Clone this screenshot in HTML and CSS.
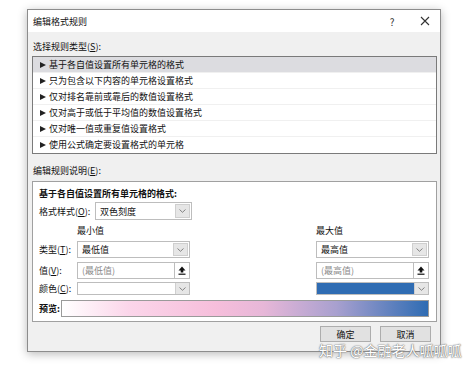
FILE: index.html
```html
<!DOCTYPE html>
<html lang="zh-CN">
<head>
    <meta charset="UTF-8">
    <title>编辑格式规则</title>
    <link rel="stylesheet" href="styles.css">
</head>
<body>

    <div class="dialog">
        <div class="title-bar">
            <span class="title">编辑格式规则</span>
            <span class="title-btn help">?</span>
            <span class="title-btn close">
                <svg width="10" height="10" viewBox="0 0 10 10"><path d="M1 1L9 9M9 1L1 9" stroke="#333" stroke-width="1.1"/></svg>
            </span>
        </div>

        <div class="label">选择规则类型(<u>S</u>):</div>
        <ul class="rule-list">
            <li class="selected">基于各自值设置所有单元格的格式</li>
            <li>只为包含以下内容的单元格设置格式</li>
            <li>仅对排名靠前或靠后的数值设置格式</li>
            <li>仅对高于或低于平均值的数值设置格式</li>
            <li>仅对唯一值或重复值设置格式</li>
            <li>使用公式确定要设置格式的单元格</li>
        </ul>

        <div class="label second">编辑规则说明(<u>E</u>):</div>
        <div class="panel">
            <div class="heading">基于各自值设置所有单元格的格式:</div>

            <div class="style-row">
                <span class="row-label">格式样式(<u>O</u>):</span>
                <div class="select style-select">
                    <span class="select-text">双色刻度</span>
                    <span class="drop"><svg width="7" height="4" viewBox="0 0 7 4"><path d="M0.5 0.5L3.5 3.3L6.5 0.5" fill="none" stroke="#777" stroke-width="0.9"/></svg></span>
                </div>
            </div>

            <div class="grid-row heads">
                <span></span>
                <span>最小值</span>
                <span></span>
                <span>最大值</span>
            </div>

            <div class="grid-row type-row">
                <span class="row-label">类型(<u>T</u>):</span>
                <div class="select">
                    <span class="select-text">最低值</span>
                    <span class="drop"><svg width="7" height="4" viewBox="0 0 7 4"><path d="M0.5 0.5L3.5 3.3L6.5 0.5" fill="none" stroke="#777" stroke-width="0.9"/></svg></span>
                </div>
                <span></span>
                <div class="select">
                    <span class="select-text">最高值</span>
                    <span class="drop"><svg width="7" height="4" viewBox="0 0 7 4"><path d="M0.5 0.5L3.5 3.3L6.5 0.5" fill="none" stroke="#777" stroke-width="0.9"/></svg></span>
                </div>
            </div>

            <div class="grid-row value-row">
                <span class="row-label">值(<u>V</u>):</span>
                <div class="input">
                    <span class="placeholder">(最低值)</span>
                    <span class="pick"><svg width="8" height="9" viewBox="0 0 8 9"><path d="M4 0.5L7.5 4.5H5.3V6.5H2.7V4.5H0.5Z" fill="#111"/><rect x="0.5" y="7.6" width="7" height="1.2" fill="#111"/></svg></span>
                </div>
                <span></span>
                <div class="input">
                    <span class="placeholder">(最高值)</span>
                    <span class="pick"><svg width="8" height="9" viewBox="0 0 8 9"><path d="M4 0.5L7.5 4.5H5.3V6.5H2.7V4.5H0.5Z" fill="#111"/><rect x="0.5" y="7.6" width="7" height="1.2" fill="#111"/></svg></span>
                </div>
            </div>

            <div class="grid-row color-row">
                <span class="row-label">颜色(<u>C</u>):</span>
                <div class="select color">
                    <span class="swatch"></span>
                    <span class="drop"><svg width="7" height="4" viewBox="0 0 7 4"><path d="M0.5 0.5L3.5 3.3L6.5 0.5" fill="none" stroke="#777" stroke-width="0.9"/></svg></span>
                </div>
                <span></span>
                <div class="select color">
                    <span class="swatch blue"></span>
                    <span class="drop"><svg width="7" height="4" viewBox="0 0 7 4"><path d="M0.5 0.5L3.5 3.3L6.5 0.5" fill="none" stroke="#777" stroke-width="0.9"/></svg></span>
                </div>
            </div>

            <div class="preview-row">
                <span class="preview-label">预览:</span>
                <div class="preview-bar"></div>
            </div>
        </div>

        <div class="buttons">
            <button class="btn">确定</button>
            <button class="btn">取消</button>
        </div>
    </div>

    <div class="watermark">知乎 @金融老人呱呱呱</div>

</body>
</html>
```

FILE: styles.css
```css
body {
    margin: 0;
    background-color: white;
    font-family: "Noto Sans CJK SC", "Noto Sans", sans-serif;
    font-size: 9px;
    color: #111;
    position: relative;
    height: 370px;
    overflow: hidden;
}

u {
    text-decoration: underline;
    text-underline-offset: 1px;
}

.dialog {
    margin-left: 27px;
    margin-top: 9px;
    width: 414px;
    box-sizing: border-box;
    border: 1px solid #8c8c8c;
    background-color: #f0f0f0;
    box-shadow: 0 2px 9px rgba(0, 0, 0, 0.28);
    display: flex;
    flex-direction: column;
}

.title-bar {
    height: 22px;
    background-color: white;
    display: flex;
    align-items: center;
    padding-left: 5px;
}

.title {
    flex: 1;
}

.title-btn {
    display: flex;
    align-items: center;
    justify-content: center;
    color: #333;
}

.help {
    width: 12px;
    margin-right: 21px;
    font-size: 10px;
}

.close {
    width: 12px;
    margin-right: 9px;
}

.label {
    height: 12px;
    line-height: 12px;
    margin: 9px 0 3px 5px;
}

.label.second {
    margin-top: 11px;
    margin-bottom: 4px;
}

.rule-list {
    list-style-type: none;
    margin: 0 3px 0 4px;
    padding: 0;
    background-color: white;
    border: 1px solid #7a7a7a;
}

.rule-list li {
    height: 16px;
    line-height: 16px;
    box-sizing: border-box;
    border-bottom: 1px solid #f0f0f0;
    padding-left: 16px;
    position: relative;
}

.rule-list li:last-child {
    border-bottom: none;
}

.rule-list li::before {
    content: "";
    position: absolute;
    left: 7px;
    top: 5px;
    border-left: 6px solid #222;
    border-top: 3px solid transparent;
    border-bottom: 3px solid transparent;
}

.rule-list li.selected {
    background-color: #dcdce0;
}

.panel {
    margin: 0 3px 0 4px;
    background-color: white;
    border: 1px solid #a0a0a0;
    padding: 6px 7px 4px 6px;
}

.heading {
    height: 12px;
    line-height: 12px;
    font-weight: bold;
}

.style-row {
    display: flex;
    align-items: center;
    margin-top: 2px;
    height: 18px;
}

.style-row .row-label {
    width: 56px;
}

.select {
    display: flex;
    align-items: stretch;
    box-sizing: border-box;
    border: 1px solid #bdbdbd;
    background-color: white;
    height: 100%;
}

.style-select {
    width: 97px;
}

.select-text {
    flex: 1;
    display: flex;
    align-items: center;
    padding-left: 4px;
}

.drop {
    width: 13px;
    margin: 1px;
    background-color: #e6e6e6;
    border: 1px solid #cfcfcf;
    display: flex;
    align-items: center;
    justify-content: center;
}

.grid-row {
    display: grid;
    grid-template-columns: 38px 113px 1fr 113px;
    align-items: center;
}

.heads {
    margin-top: 5px;
    height: 12px;
    line-height: 12px;
}

.type-row {
    margin-top: 4px;
    height: 17px;
}

.value-row {
    margin-top: 4px;
    height: 17px;
}

.color-row {
    margin-top: 3px;
    height: 13px;
}

.input {
    display: flex;
    box-sizing: border-box;
    height: 100%;
    border: 1px solid #bdbdbd;
    background-color: white;
}

.placeholder {
    flex: 1;
    display: flex;
    align-items: center;
    padding-left: 4px;
    color: #8a8a8a;
}

.pick {
    width: 14px;
    border-left: 1px solid #bdbdbd;
    display: flex;
    align-items: center;
    justify-content: center;
}

.select.color .drop {
    margin: 0;
    border: none;
    border-left: 1px solid #cfcfcf;
}

.swatch {
    flex: 1;
}

.swatch.blue {
    background-color: #2f6cb3;
}

.preview-row {
    display: flex;
    align-items: stretch;
    margin-top: 5px;
    height: 17px;
}

.preview-label {
    width: 22px;
    font-weight: bold;
    display: flex;
    align-items: center;
}

.preview-bar {
    flex: 1;
    border: 1px solid #9a9a9a;
    background: linear-gradient(90deg, #ffffff 0%, #fbd6ea 18%, #f6bedb 42%, #e7b7d8 55%, #a8a0cf 75%, #2f6cb3 100%);
}

.buttons {
    display: flex;
    justify-content: flex-end;
    gap: 9px;
    padding-right: 9px;
    margin-top: 4px;
    margin-bottom: 9px;
}

.btn {
    width: 51px;
    height: 16px;
    padding: 0;
    font-family: inherit;
    font-size: 9px;
    color: #111;
    background-color: #e1e1e1;
    border: 1px solid #adadad;
}

.watermark {
    position: absolute;
    left: 319px;
    top: 341px;
    font-size: 14px;
    line-height: 18px;
    color: white;
    text-shadow: 0 0 1px #777, 0 0 1px #777, 0 0 2px #999;
    white-space: nowrap;
}
```
